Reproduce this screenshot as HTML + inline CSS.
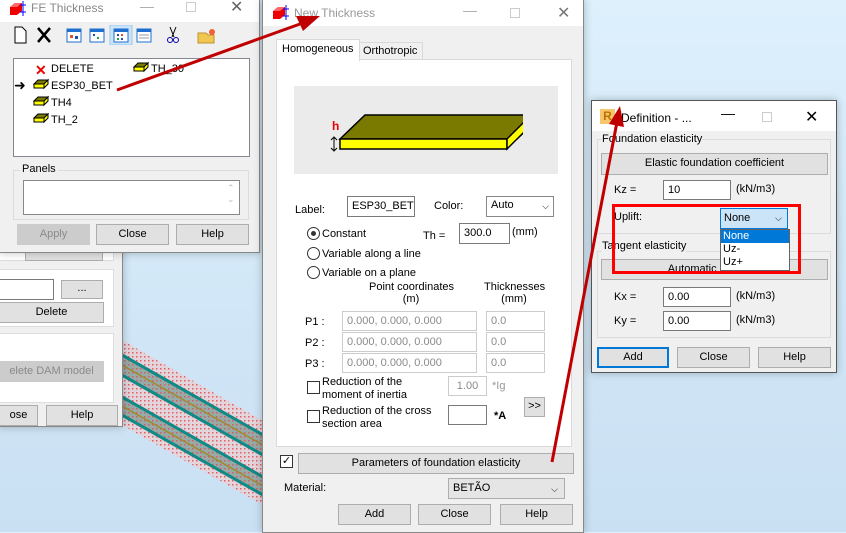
<!DOCTYPE html>
<html><head><meta charset="utf-8"><style>
*{box-sizing:border-box;margin:0;padding:0}
body{width:846px;height:532px;overflow:hidden;position:relative;background:linear-gradient(#ddf0fc,#c9e0f3);font-family:"Liberation Sans",sans-serif;font-size:11px;color:#000}
.a{position:absolute}
.win{position:absolute;background:#f0f0f0;border:1px solid #888;box-shadow:0 0 8px rgba(0,0,0,.25)}
.btn{position:absolute;background:#e1e1e1;border:1px solid #adadad;text-align:center;line-height:18px;font-size:11px}
.tb{position:absolute;background:#fff;border:1px solid #7a7a7a;padding-left:4px;line-height:18px;font-size:11px}
.dis{color:#8a8a8a;border-color:#ccc}
.t{position:absolute;white-space:nowrap}
.rad{position:absolute;width:13px;height:13px;border:1px solid #333;border-radius:50%;background:#fff}
.chk{position:absolute;width:13px;height:13px;border:1px solid #333;background:#fff}
.grp{position:absolute;border:1px solid #dcdcdc}
.ttl{position:absolute;left:0;top:0;right:0;background:#fff}
</style></head><body>

<svg class="a" style="left:0;top:0" width="846" height="532">
<defs><pattern id="p" width="4" height="4" patternUnits="userSpaceOnUse"><rect width="4" height="4" fill="#e4d4dc"/><rect width="1.5" height="1.5" fill="#e06060"/></pattern>
<pattern id="q" width="4" height="4" patternUnits="userSpaceOnUse"><rect width="4" height="4" fill="#98aaa8"/><rect width="1.5" height="1.5" fill="#d06060"/></pattern></defs>
<polygon points="122,340 263,421 263,505 122,425" fill="url(#p)"/>
<polygon points="122,353 263,433 263,457 122,377" fill="url(#q)"/>
<polygon points="122,395 263,475 263,497 122,417" fill="url(#q)"/>
<polyline points="122,355 263,435" stroke="#0f8a86" stroke-width="3"/>
<polyline points="122,375 263,455" stroke="#0f8a86" stroke-width="3"/>
<polyline points="122,365 263,445" stroke="#a08a30" stroke-width="1.5"/>
<polyline points="122,397 263,477" stroke="#0f8a86" stroke-width="3"/>
<polyline points="122,415 263,495" stroke="#0f8a86" stroke-width="3"/>
<polyline points="122,406 263,486" stroke="#a08a30" stroke-width="1.5"/>
</svg>

<div class="win" style="left:-2px;top:235px;width:125px;height:192px;background:#f0f0f0">
 <div class="a" style="left:0;top:0;width:115px;height:25px;background:#fff;border:1px solid #ddd"></div>
 <div class="btn" style="left:26px;top:5px;width:78px;height:20px"></div>
 <div class="a" style="left:0;top:33px;width:115px;height:58px;background:#fff;border:1px solid #ddd"></div>
 <div class="tb" style="left:0;top:43px;width:55px;height:21px"></div>
 <div class="btn" style="left:62px;top:44px;width:42px;height:19px;line-height:15px">...</div>
 <div class="btn" style="left:0;top:66px;width:105px;height:21px">Delete</div>
 <div class="a" style="left:0;top:97px;width:115px;height:70px;background:#fff;border:1px solid #ddd"></div>
 <div class="btn dis" style="left:0;top:125px;width:105px;height:21px;background:#ccc">elete DAM model</div>
 <div class="btn" style="left:0;top:169px;width:39px;height:21px">ose</div>
 <div class="btn" style="left:47px;top:169px;width:72px;height:21px">Help</div>
</div>

<div class="win" style="left:-1px;top:-1px;width:261px;height:254px">
 <div class="ttl" style="height:22px"></div>
 <svg class="a" style="left:9px;top:1px" width="18" height="16"><polygon points="1,6 6,2 13,2 13,10 8,14 1,14" fill="#e00"/><polygon points="1,6 6,2 13,2 8,6" fill="#f66"/><line x1="14" y1="0" x2="14" y2="15" stroke="#00f"/><line x1="11" y1="4" x2="17" y2="4" stroke="#00f"/><line x1="11" y1="11" x2="17" y2="11" stroke="#00f"/></svg>
 <div class="t" style="left:31px;top:1px;font-size:12px;color:#888">FE Thickness</div>
 <div class="t" style="left:140px;top:-2px;font-size:14px;color:#aaa">—</div>
 <div class="a" style="left:186px;top:2px;width:10px;height:10px;border:1px solid #ccc"></div>
 <div class="t" style="left:230px;top:-3px;font-size:16px;color:#666">✕</div>
 <svg class="a" style="left:12px;top:25px" width="205" height="20">
  <path d="M3,2 H10 L14,6 V18 H3 Z" fill="#fff" stroke="#000"/>
  <path d="M26,3 L38,17 M38,3 L26,17" stroke="#000" stroke-width="2.5"/>
  <rect x="55" y="4" width="14" height="13" fill="#fff" stroke="#1e6fd0"/><rect x="55" y="4" width="14" height="3" fill="#1e6fd0"/><rect x="58" y="10" width="3" height="3" fill="#e05030"/><rect x="63" y="11" width="3" height="3" fill="#1e4fb0"/>
  <rect x="78" y="4" width="14" height="13" fill="#fff" stroke="#1e6fd0"/><rect x="78" y="4" width="14" height="3" fill="#1e6fd0"/><rect x="81" y="9" width="2" height="2" fill="#1e4fb0"/><rect x="85" y="12" width="2" height="2" fill="#20a040"/>
  <rect x="98" y="0" width="22" height="20" fill="#cce4f7" stroke="#99c9ef"/>
  <rect x="102" y="4" width="14" height="13" fill="#fff" stroke="#1e6fd0"/><rect x="102" y="4" width="14" height="3" fill="#1e6fd0"/><rect x="105" y="9" width="2" height="2" fill="#1e4fb0"/><rect x="109" y="9" width="2" height="2" fill="#e05030"/><rect x="105" y="13" width="2" height="2" fill="#20a040"/><rect x="109" y="13" width="2" height="2" fill="#1e4fb0"/>
  <rect x="125" y="4" width="14" height="13" fill="#fff" stroke="#1e6fd0"/><rect x="125" y="4" width="14" height="3" fill="#1e6fd0"/><path d="M127,10H137M127,13H137" stroke="#99a"/>
  <path d="M158,2 L162,12 M164,2 L160,12" stroke="#000"/><circle cx="158" cy="15" r="2.5" fill="none" stroke="#00a"/><circle cx="164" cy="15" r="2.5" fill="none" stroke="#00a"/>
  <path d="M186,8 H194 L196,10 H202 V18 H186 Z" fill="#f0c850" stroke="#c09030"/><circle cx="200" cy="7" r="3" fill="#f06030"/>
 </svg>
 <div class="a" style="left:13px;top:58px;width:237px;height:99px;background:#fff;border:1px solid #828790"></div>
 <div class="t" style="left:35px;top:62px;color:#e00;font-size:14px;font-weight:bold">✕</div>
 <div class="t" style="left:51px;top:63px">DELETE</div>
 <svg class="a" style="left:33px;top:78px" width="20" height="54">
  <g id="pl"><polygon points="1,6 5,2 15,2 11,6" fill="#7a7a00" stroke="#000"/><polygon points="1,6 11,6 11,10 1,10" fill="#ff0" stroke="#000"/><polygon points="11,6 15,2 15,6 11,10" fill="#ff0" stroke="#000"/></g>
  <use href="#pl" y="17"/><use href="#pl" y="34"/>
 </svg>
 <svg class="a" style="left:133px;top:61px" width="20" height="14"><use href="#pl"/></svg>
 <div class="t" style="left:151px;top:63px">TH_30</div>
 <div class="t" style="left:14px;top:77px;font-size:14px">➜</div>
 <div class="t" style="left:51px;top:80px">ESP30_BET</div>
 <div class="t" style="left:51px;top:97px">TH4</div>
 <div class="t" style="left:51px;top:114px">TH_2</div>
 <div class="grp" style="left:13px;top:170px;width:236px;height:50px"></div>
 <div class="t" style="left:20px;top:163px;background:#f0f0f0;padding:0 2px">Panels</div>
 <div class="a" style="left:23px;top:180px;width:217px;height:35px;background:#fff;border:1px solid #888"></div>
 <div class="t" style="left:227px;top:183px;color:#bbb;font-size:9px">⌃<br>⌄</div>
 <div class="btn dis" style="left:17px;top:224px;width:73px;height:21px;background:#ccc">Apply</div>
 <div class="btn" style="left:96px;top:224px;width:73px;height:21px">Close</div>
 <div class="btn" style="left:176px;top:224px;width:73px;height:21px">Help</div>
</div>

<div class="win" style="left:262px;top:-1px;width:322px;height:534px">
 <div class="ttl" style="height:26px"></div>
 <svg class="a" style="left:9px;top:5px" width="18" height="16"><polygon points="1,6 6,2 13,2 13,10 8,14 1,14" fill="#e00"/><polygon points="1,6 6,2 13,2 8,6" fill="#f66"/><line x1="14" y1="0" x2="14" y2="15" stroke="#00f"/><line x1="11" y1="4" x2="17" y2="4" stroke="#00f"/><line x1="11" y1="11" x2="17" y2="11" stroke="#00f"/></svg>
 <div class="t" style="left:31px;top:6px;font-size:12px;color:#999">New Thickness</div>
 <div class="t" style="left:200px;top:2px;font-size:14px;color:#aaa">—</div>
 <div class="a" style="left:247px;top:8px;width:10px;height:10px;border:1px solid #ccc"></div>
 <div class="t" style="left:294px;top:3px;font-size:16px;color:#777">✕</div>
 <div class="a" style="left:13px;top:59px;width:296px;height:388px;background:#fff;border:1px solid #d9d9d9"></div>
 <div class="a" style="left:13px;top:39px;width:84px;height:22px;background:#fff;border:1px solid #d9d9d9;border-bottom:none"></div>
 <div class="t" style="left:19px;top:43px">Homogeneous</div>
 <div class="a" style="left:96px;top:42px;width:64px;height:18px;background:#f0f0f0;border:1px solid #d9d9d9"></div>
 <div class="t" style="left:100px;top:45px">Orthotropic</div>
 <div class="a" style="left:31px;top:86px;width:264px;height:88px;background:#ebebeb"></div>
 <svg class="a" style="left:60px;top:110px" width="200" height="50">
  <polygon points="17,29 42,5 219,5 194,29" fill="#7a7a00" stroke="#000" stroke-width="1.5"/>
  <polygon points="17,29 184,29 184,39 17,39" fill="#ff0" stroke="#000" stroke-width="1.5"/>
  <polygon points="184,29 208,5 208,15 184,39" fill="#ff0" stroke="#000" stroke-width="1.5"/>
  <path d="M11,28 V40 M8,30 L11,27 L14,30 M8,38 L11,41 L14,38" stroke="#000" fill="none"/>
 </svg>
 <div class="t" style="left:69px;top:119px;color:#e00;font-weight:bold;font-size:12px">h</div>
 <div class="t" style="left:32px;top:204px">Label:</div>
 <div class="tb" style="left:84px;top:196px;width:68px;height:21px">ESP30_BET</div>
 <div class="t" style="left:171px;top:200px">Color:</div>
 <div class="tb" style="left:223px;top:196px;width:68px;height:21px;border-color:#888;line-height:16px">Auto<span style="position:absolute;right:4px;top:1px;font-size:9px">⌵</span></div>
 <div class="rad" style="left:44px;top:227px"></div><div class="a" style="left:48px;top:231px;width:5px;height:5px;border-radius:50%;background:#333"></div>
 <div class="t" style="left:59px;top:228px">Constant</div>
 <div class="rad" style="left:44px;top:247px"></div><div class="t" style="left:59px;top:248px">Variable along a line</div>
 <div class="rad" style="left:44px;top:266px"></div><div class="t" style="left:59px;top:267px">Variable on a plane</div>
 <div class="t" style="left:160px;top:230px">Th =</div>
 <div class="tb" style="left:196px;top:223px;width:51px;height:21px">300.0</div>
 <div class="t" style="left:249px;top:226px">(mm)</div>
 <div class="t" style="left:106px;top:281px;text-align:center;width:84px">Point coordinates<br>(m)</div>
 <div class="t" style="left:221px;top:281px;text-align:center;width:60px">Thicknesses<br>(mm)</div>
 <div class="t" style="left:42px;top:316px">P1 :</div><div class="tb dis" style="left:79px;top:311px;width:135px;height:20px">0.000, 0.000, 0.000</div><div class="tb dis" style="left:223px;top:311px;width:59px;height:20px">0.0</div>
 <div class="t" style="left:42px;top:337px">P2 :</div><div class="tb dis" style="left:79px;top:332px;width:135px;height:20px">0.000, 0.000, 0.000</div><div class="tb dis" style="left:223px;top:332px;width:59px;height:20px">0.0</div>
 <div class="t" style="left:42px;top:358px">P3 :</div><div class="tb dis" style="left:79px;top:353px;width:135px;height:20px">0.000, 0.000, 0.000</div><div class="tb dis" style="left:223px;top:353px;width:59px;height:20px">0.0</div>
 <div class="chk" style="left:44px;top:381px"></div>
 <div class="t" style="left:59px;top:376px;line-height:13px">Reduction of the<br>moment of inertia</div>
 <div class="tb dis" style="left:185px;top:376px;width:39px;height:20px;text-align:center;padding:0">1.00</div>
 <div class="t" style="left:229px;top:380px;color:#999">*Ig</div>
 <div class="chk" style="left:44px;top:410px"></div>
 <div class="t" style="left:59px;top:405px;line-height:13px">Reduction of the cross<br>section area</div>
 <div class="tb" style="left:185px;top:405px;width:39px;height:20px"></div>
 <div class="t" style="left:231px;top:410px;font-weight:bold">*A</div>
 <div class="btn" style="left:261px;top:397px;width:21px;height:20px;line-height:17px">&gt;&gt;</div>
 <div class="chk" style="left:17px;top:455px;border-color:#333;font-size:11px;line-height:10px;text-align:center">✓</div>
 <div class="btn" style="left:35px;top:453px;width:276px;height:21px">Parameters of foundation elasticity</div>
 <div class="t" style="left:21px;top:482px">Material:</div>
 <div class="tb" style="left:185px;top:478px;width:117px;height:21px;background:#e5e5e5;border-color:#adadad">BETÃO<span style="position:absolute;right:6px;top:1px;font-size:9px">⌵</span></div>
 <div class="btn" style="left:75px;top:504px;width:73px;height:21px">Add</div>
 <div class="btn" style="left:155px;top:504px;width:73px;height:21px">Close</div>
 <div class="btn" style="left:237px;top:504px;width:73px;height:21px">Help</div>
</div>

<div class="win" style="left:591px;top:100px;width:246px;height:273px;border-color:#555">
 <div class="ttl" style="height:30px"></div>
 <div class="a" style="left:8px;top:8px;width:15px;height:15px;background:#f5c76a;color:#c07000;font-weight:bold;font-size:12px;text-align:center;line-height:15px">R</div>
 <div class="t" style="left:29px;top:10px;font-size:12px">Definition - ...</div>
 <div class="t" style="left:129px;top:4px;font-size:14px">—</div>
 <div class="a" style="left:170px;top:11px;width:10px;height:10px;border:1px solid #ccc"></div>
 <div class="t" style="left:213px;top:6px;font-size:16px">✕</div>
 <div class="grp" style="left:5px;top:38px;width:234px;height:95px"></div>
 <div class="t" style="left:10px;top:32px;background:#f0f0f0">Foundation elasticity</div>
 <div class="btn" style="left:9px;top:52px;width:227px;height:22px">Elastic foundation coefficient</div>
 <div class="t" style="left:22px;top:83px">Kz =</div>
 <div class="tb" style="left:71px;top:79px;width:68px;height:20px">10</div>
 <div class="t" style="left:144px;top:82px">(kN/m3)</div>
 <div class="grp" style="left:5px;top:150px;width:234px;height:87px"></div>
 <div class="t" style="left:10px;top:139px;background:#f0f0f0">Tangent elasticity</div>
 <div class="btn" style="left:9px;top:158px;width:227px;height:21px">Automatic direction</div>
 <div class="t" style="left:22px;top:190px">Kx =</div>
 <div class="tb" style="left:71px;top:186px;width:68px;height:20px">0.00</div>
 <div class="t" style="left:144px;top:189px">(kN/m3)</div>
 <div class="t" style="left:22px;top:214px">Ky =</div>
 <div class="tb" style="left:71px;top:210px;width:68px;height:20px">0.00</div>
 <div class="t" style="left:144px;top:213px">(kN/m3)</div>
 <div class="btn" style="left:5px;top:246px;width:72px;height:21px;border:2px solid #0078d7;line-height:17px">Add</div>
 <div class="btn" style="left:85px;top:246px;width:73px;height:21px">Close</div>
 <div class="btn" style="left:166px;top:246px;width:73px;height:21px">Help</div>
 <div class="a" style="left:20px;top:103px;width:189px;height:70px;border:3px solid #f00"></div>
 <div class="t" style="left:22px;top:110px">Uplift:</div>
 <div class="a" style="left:128px;top:107px;width:68px;height:21px;background:#cce4f7;border:1px solid #0078d7;padding-left:3px;line-height:19px">None<span style="position:absolute;right:5px;top:0;font-size:9px">⌵</span></div>
 <div class="a" style="left:128px;top:128px;width:70px;height:42px;background:#fff;border:1px solid #646464;line-height:13px">
  <div style="background:#0078d7;color:#fff;padding-left:2px">None</div><div style="padding-left:2px">Uz-</div><div style="padding-left:2px">Uz+</div></div>
</div>

<svg class="a" style="left:0;top:0" width="846" height="532">
<g stroke="#c00000" stroke-width="3" fill="#c00000">
<line x1="117" y1="90" x2="300" y2="24"/>
<polygon points="320,16 296,16 303,31" stroke="none"/>
<line x1="552" y1="462" x2="617" y2="122"/>
<polygon points="620,106 609,124 624,127" stroke="none"/>
</g></svg>
</body></html>
